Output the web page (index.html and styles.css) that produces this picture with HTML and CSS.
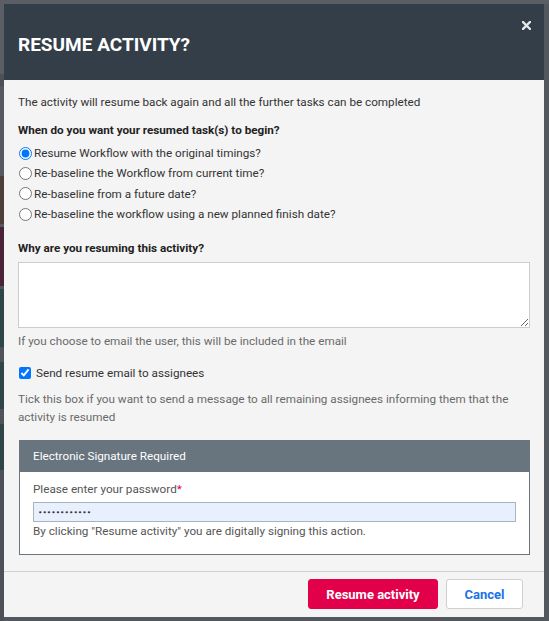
FILE: index.html
```html
<!DOCTYPE html>
<html lang="en">
<head>
<meta charset="utf-8">
<title>Resume activity</title>
<link rel="stylesheet" href="styles.css">
</head>
<body>
<div class="backdrop"></div>
<div class="modal" role="dialog" aria-labelledby="modal-title">
  <header class="modal-header">
    <h1 class="modal-title" id="modal-title">RESUME ACTIVITY?</h1>
    <button class="close" aria-label="Close">
      <svg width="9" height="9" viewBox="0 0 9 9"><path d="M1 1 L8 8 M8 1 L1 8" stroke="#e4e6e8" stroke-width="2.4" stroke-linecap="square"/></svg>
    </button>
  </header>
  <div class="modal-body">
    <p class="intro">The activity will resume back again and all the further tasks can be completed</p>
    <p class="question">When do you want your resumed task(s) to begin?</p>
    <div class="options">
      <label class="option"><input type="radio" name="begin" checked><span>Resume Workflow with the original timings?</span></label>
      <label class="option"><input type="radio" name="begin"><span>Re-baseline the Workflow from current time?</span></label>
      <label class="option"><input type="radio" name="begin"><span>Re-baseline from a future date?</span></label>
      <label class="option"><input type="radio" name="begin"><span>Re-baseline the workflow using a new planned finish date?</span></label>
    </div>
    <p class="question why">Why are you resuming this activity?</p>
    <textarea class="reason"></textarea>
    <p class="help">If you choose to email the user, this will be included in the email</p>
    <label class="check"><input type="checkbox" checked><span>Send resume email to assignees</span></label>
    <p class="help tick">Tick this box if you want to send a message to all remaining assignees informing them that the activity is resumed</p>
    <section class="sig">
      <div class="sig-head">Electronic Signature Required</div>
      <div class="sig-body">
        <label class="sig-label">Please enter your password<span class="req">*</span></label>
        <input class="pw" type="password" value="passwordtext">
        <p class="sig-note">By clicking "Resume activity" you are digitally signing this action.</p>
      </div>
    </section>
  </div>
  <footer class="modal-footer">
    <button class="btn btn-primary">Resume activity</button>
    <button class="btn btn-secondary">Cancel</button>
  </footer>
</div>
</body>
</html>
```
FILE: styles.css
```css
* { box-sizing: border-box; }

html, body {
  margin: 0;
  padding: 0;
}

body {
  width: 549px;
  height: 621px;
  overflow: hidden;
  position: relative;
  font-family: Roboto, "Liberation Sans", Arial, sans-serif;
  background: #52575d;
}

.backdrop {
  position: absolute;
  inset: 0;
  background:
    linear-gradient(to bottom,
      #5b5f65 0 74px, #4c5157 74px 86px, #565a60 86px 176px,
      #4b3f38 176px 224px, #55585d 224px 227px, #4a2436 227px 286px,
      #505459 286px 289px, #2f4649 289px 347px, #505459 347px 362px,
      #2f4649 362px 409px, #505459 409px 424px, #2f4649 424px 470px,
      #4e5258 470px) left top / 4px 100% no-repeat,
    linear-gradient(#5b5f65, #5b5f65) left top / 100% 4px no-repeat,
    #53585e;
}

.modal {
  position: absolute;
  left: 4px;
  top: 4px;
  width: 540px;
  height: 613px;
  background: #f4f4f4;
  display: flex;
  flex-direction: column;
}

.modal-header {
  position: relative;
  height: 76px;
  flex: none;
  background: #343e49;
  padding: 29px 14px 0;
}

.modal-title {
  margin: 0;
  font-size: 19px;
  line-height: 24px;
  font-weight: 700;
  color: #ffffff;
}

.close {
  position: absolute;
  right: 12px;
  top: 16px;
  width: 11px;
  height: 11px;
  padding: 1px;
  border: 0;
  background: none;
  display: flex;
}

.modal-body {
  flex: 1;
  padding: 13px 14px 0;
  font-size: 11.7px;
  line-height: 18px;
  color: #333;
}

.modal-body p { margin: 0; }

.question {
  margin-top: 10px !important;
  font-weight: 700;
  color: #222;
}

.options {
  margin-top: 4px;
  display: flex;
  flex-direction: column;
}

.option {
  display: flex;
  align-items: center;
  gap: 2px;
  height: 20.3px;
  line-height: 20px;
  color: #333;
}

.option input {
  margin: 0 0 0 1px;
  width: 13px;
  height: 13px;
}

.question.why { margin-top: 15px !important; }

.reason {
  display: block;
  width: 100%;
  height: 66px;
  margin-top: 5px;
  border: 1px solid #cccccc;
  background: #fff;
  resize: vertical;
}

.help {
  color: #6a6a6a;
  margin-top: 4px !important;
}

.check {
  display: flex;
  align-items: center;
  gap: 5px;
  margin-top: 14px;
  color: #333;
}

.check input {
  margin: 0 0 0 1px;
  width: 12px;
  height: 12px;
}

.help.tick { margin-top: 8px !important; }

.sig {
  margin-top: 14px;
  margin-left: 1px;
  border: 1px solid #6b757e;
  background: #fff;
}

.sig-head {
  height: 31px;
  background: #68747e;
  color: #fff;
  padding: 6px 13px 0;
  line-height: 18px;
}

.sig-body {
  padding: 8px 13px 14px;
  color: #555;
}

.sig-label { display: block; }

.req { color: #e0004d; }

.pw {
  display: block;
  width: 100%;
  height: 20px;
  margin-top: 4px;
  padding: 0 4px;
  border: 1px solid #aab4be;
  background: #e8f0fe;
  font-size: 7.5px;
  color: #333;
  font-family: "DejaVu Sans", sans-serif;
}

.modal-footer {
  flex: none;
  height: 46px;
  border-top: 1px solid #cfcfcf;
  padding: 7px 21px 0 0;
  display: flex;
  justify-content: flex-end;
  gap: 8px;
}

.btn {
  height: 30px;
  border-radius: 3px;
  font-family: Roboto, "Liberation Sans", Arial, sans-serif;
  font-size: 13px;
  font-weight: 700;
  padding: 0;
}

.btn-primary {
  width: 130px;
  background: #e2004b;
  color: #fff;
  border: 1px solid #e2004b;
}

.btn-secondary {
  width: 77px;
  background: #fff;
  color: #1a73e8;
  border: 1px solid #cfcfcf;
}
```
